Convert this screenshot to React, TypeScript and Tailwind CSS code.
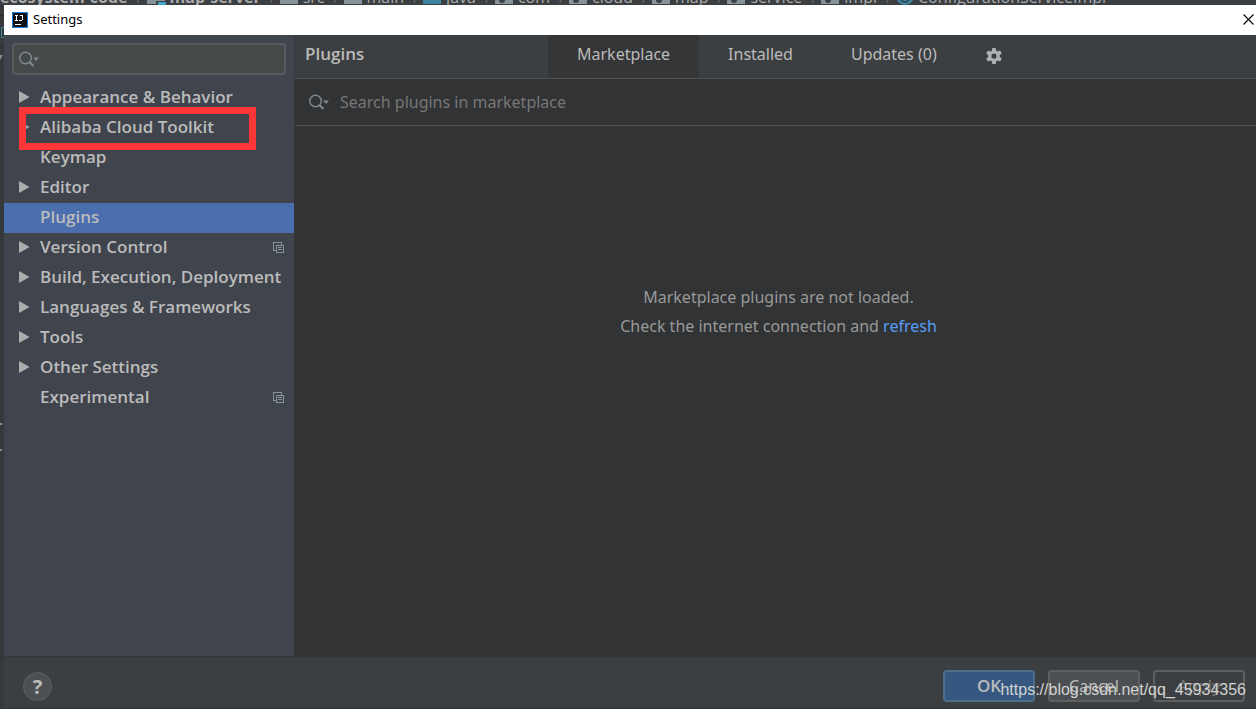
import type { ReactNode } from "react"
import clsx from "clsx"

type TreeItem = {
  label: string
  expandable?: boolean
  selected?: boolean
  projectLevel?: boolean
  highlighted?: boolean
}

const treeItems: TreeItem[] = [
  { label: "Appearance & Behavior", expandable: true },
  { label: "Alibaba Cloud Toolkit", expandable: true, highlighted: true },
  { label: "Keymap" },
  { label: "Editor", expandable: true },
  { label: "Plugins", selected: true },
  { label: "Version Control", expandable: true, projectLevel: true },
  { label: "Build, Execution, Deployment", expandable: true },
  { label: "Languages & Frameworks", expandable: true },
  { label: "Tools", expandable: true },
  { label: "Other Settings", expandable: true },
  { label: "Experimental", projectLevel: true },
]

const crumbs = ["src", "main", "java", "com", "cloud", "map", "service", "impl"]

const SearchIcon = () => (
  <svg width="22" height="18" viewBox="0 0 22 18" fill="none" className="shrink-0">
    <circle cx="7.5" cy="8" r="5.8" stroke="#7f8b91" strokeWidth="1.4" />
    <path d="M11.5 12l4 4" stroke="#7f8b91" strokeWidth="2" />
    <path d="M15 7.5h6l-3 3.5z" fill="#7f8b91" />
  </svg>
)

const ProjectIcon = () => (
  <svg width="11" height="11" viewBox="0 0 11 11" fill="none" shapeRendering="crispEdges">
    <path d="M2.5 8.5H.5V.5h8v2" stroke="#87939a" />
    <path d="M3.5 3.5h7v7h-7z" stroke="#87939a" />
    <path d="M5 5.5h4M5 7.5h4" stroke="#87939a" />
  </svg>
)

const GearIcon = () => (
  <svg width="16" height="16" viewBox="0 0 16 16">
    <g fill="#afb1b3">
      <path
        fillRule="evenodd"
        d="M8 2.2a5.8 5.8 0 100 11.6A5.8 5.8 0 008 2.2zm0 3.2a2.6 2.6 0 110 5.2 2.6 2.6 0 010-5.2z"
      />
      <path d="M6.3 0h3.4l.5 3.2H5.8zM6.3 16h3.4l.5-3.2H5.8z" />
      <path d="M6.3 0h3.4l.5 3.2H5.8zM6.3 16h3.4l.5-3.2H5.8z" transform="rotate(60 8 8)" />
      <path d="M6.3 0h3.4l.5 3.2H5.8zM6.3 16h3.4l.5-3.2H5.8z" transform="rotate(120 8 8)" />
    </g>
  </svg>
)

const IdeaLogo = () => (
  <svg width="16" height="16" viewBox="0 0 16 16" fill="none" shapeRendering="crispEdges">
    <path d="M0 0h16v16H0z" fill="#1a7df0" />
    <path d="M1 1h14v14H1z" fill="#101216" />
    <path d="M3 3h3v1H3zM4 4h1v4H4zM3 8h3v1H3zM8 3h3v1H8zM10 4h1v4h-1zM7 8h3v1H7zM3 12h6v1H3z" fill="#fff" />
  </svg>
)

const Folder = ({ color = "#87939a" }: { color?: string }) => (
  <svg width="18" height="5" viewBox="0 0 18 5" className="shrink-0">
    <path d="M0 0h18v4H0z" fill={color} />
  </svg>
)

const PackageFolder = () => (
  <svg width="18" height="5" viewBox="0 0 18 5" className="shrink-0">
    <path d="M0 0h18v4H0z" fill="#87939a" />
    <circle cx="7" cy="0" r="3" fill="#3c3f41" />
  </svg>
)

const ModuleFolder = () => (
  <svg width="20" height="5" viewBox="0 0 20 5" className="shrink-0">
    <path d="M0 0h18v1H9v3H0z" fill="#87939a" />
    <path d="M11 2h8v3h-8z" fill="#40a5c6" />
  </svg>
)

const ClassIcon = () => (
  <svg width="18" height="5" viewBox="0 0 18 5" fill="none" className="shrink-0">
    <circle cx="9" cy="-4" r="9" fill="#3e86a0" />
    <path d="M5 0q4 4 8 0" stroke="#2b3e47" strokeWidth="1.5" />
  </svg>
)

const crumbIcon = (crumb: string) => {
  if (crumb === "src" || crumb === "main") return <Folder />
  if (crumb === "java") return <Folder color="#3e86a0" />
  return <PackageFolder />
}

const Slash = () => <span className="ml-[9px] w-[10px] text-[#66696b]">/</span>

/* Lower edge of the editor's navigation bar, seen above the dialog */
const NavigationBar = () => (
  <div className="flex h-[5px] items-end overflow-hidden bg-[#3c3f41] font-['Open_Sans',sans-serif] leading-[15px] whitespace-nowrap text-[#a9abad]">
    <b>ecosystem-code</b>
    <Slash />
    <ModuleFolder />
    <b className="ml-[3px]">map-server</b>
    {crumbs.map((crumb) => (
      <span key={crumb} className="flex items-end">
        <Slash />
        {crumbIcon(crumb)}
        <span className="ml-[5px]">{crumb}</span>
      </span>
    ))}
    <Slash />
    <ClassIcon />
    <span className="ml-1">ConfigurationServiceImpl</span>
  </div>
)

/* Sliver of the editor's tool window, left of the dialog */
const EditorEdge = () => (
  <div className="w-1 shrink-0 bg-[#36393b]">
    <svg width="4" height="460" viewBox="0 0 4 460" fill="none">
      <path d="M0 10.500h4M0 41.500h4" stroke="#2b2b2b" />
      <path d="M4 22.500H1.500v10H4" stroke="#3e86a0" />
      <path d="M0 50h3l-3 5z" fill="#8a8c8e" />
      <path d="M0 418l3 1-3 1zM0 444l3 1-3 1z" fill="#adadad" />
    </svg>
  </div>
)

const TitleBar = () => (
  <header className="flex h-[30px] items-center justify-between bg-white pr-[2px] pb-px pl-2 text-black">
    <div className="flex items-center gap-[5px] text-[13px]">
      <IdeaLogo />
      <h1>Settings</h1>
    </div>
    <button type="button" aria-label="Close">
      <svg width="11" height="11" viewBox="0 0 11 11" stroke="#000" strokeWidth="1.1">
        <path d="M.5.5l10 10M10.500.5l-10 10" />
      </svg>
    </button>
  </header>
)

const TreeRow = ({ item }: { item: TreeItem }) => (
  <li className="relative">
    <button
      type="button"
      className={clsx(
        "flex h-[30px] w-full items-center pr-[10px] pb-[2px] pl-[15px] text-left",
        item.selected && "bg-[#4b6eaf]"
      )}
    >
      <span className="w-[21px] shrink-0">
        {item.expandable && (
          <svg width="11" height="12" viewBox="0 0 11 12">
            <path d="M0 0l10.500 6L0 12z" fill="#adadad" />
          </svg>
        )}
      </span>
      <span className="min-w-0 flex-1 whitespace-nowrap">{item.label}</span>
      {item.projectLevel && <ProjectIcon />}
    </button>
    {item.highlighted && (
      <span className="pointer-events-none absolute -top-[6px] left-[15px] h-[43px] w-[237px] border-[7px] border-[#fd3737]" />
    )}
  </li>
)

const Sidebar = () => (
  <aside className="w-[290px] shrink-0 bg-[#40444d] font-['Open_Sans',sans-serif] text-[17px] font-[650] text-[#bbbbbb]">
    <label className="mx-2 mt-2 flex h-8 items-center rounded-[4px] border-2 border-[#585b5d] bg-[#45494a] pl-1">
      <SearchIcon />
      <input type="text" aria-label="Search settings" className="min-w-0 flex-1 outline-none" />
    </label>
    <ul className="mt-2">
      {treeItems.map((item) => (
        <TreeRow key={item.label} item={item} />
      ))}
    </ul>
  </aside>
)

const Tab = ({ active, children }: { active?: boolean; children: ReactNode }) => (
  <button
    type="button"
    role="tab"
    aria-selected={!!active}
    className={clsx("h-full px-[29px] pb-[6px] whitespace-nowrap", active && "bg-[#343638]")}
  >
    {children}
  </button>
)

const PluginsPanel = () => (
  <main className="flex min-w-0 flex-1 flex-col border-l border-[#333537] bg-[#313335]">
    <div className="flex h-11 items-center border-b border-[#515151] bg-[#3c3f41] text-[#bbbbbb]">
      <h2 className="w-[253px] pb-[6px] pl-[10px] font-['Open_Sans',sans-serif] text-[17px] font-[650]">
        Plugins
      </h2>
      <div role="tablist" className="flex h-full">
        <Tab active>Marketplace</Tab>
        <Tab>Installed</Tab>
        <Tab>Updates (0)</Tab>
      </div>
      <button type="button" aria-label="Plugin options" className="ml-5 pb-[2px]">
        <GearIcon />
      </button>
    </div>
    <label className="flex h-[47px] items-center gap-[10px] border-b border-[#515151] pl-[13px]">
      <SearchIcon />
      <input
        type="text"
        aria-label="Search plugins"
        placeholder="Search plugins in marketplace"
        className="min-w-0 flex-1 outline-none placeholder:text-[#777777]"
      />
    </label>
    <div className="pt-[157px] pl-[6px] text-center leading-[29px] text-[#999999]">
      <p>Marketplace plugins are not loaded.</p>
      <p>
        Check the internet connection and{" "}
        <a href="#refresh" className="text-[#589df6]">
          refresh
        </a>
      </p>
    </div>
  </main>
)

const Footer = () => (
  <footer className="relative flex h-[53px] items-center justify-between border-y border-[#333537] bg-[#3c3f41] pt-[7px] pr-[11px] pl-[19px] text-[#bbbbbb]">
    <button
      type="button"
      aria-label="Help"
      className="size-[29px] rounded-full border border-[#5e6060] bg-[#4c5052] text-[20px] leading-[27px] font-bold"
    >
      ?
    </button>
    <div className="flex gap-[13px]">
      <button
        type="button"
        className="h-8 w-[92px] rounded-[4px] border-2 border-[#4c708c] bg-[#365880] font-['Open_Sans',sans-serif] text-[17px] font-[650]"
      >
        OK
      </button>
      <button type="button" className="h-8 w-[92px] rounded-[4px] border-2 border-[#5e6060] bg-[#4c5052]">
        Cancel
      </button>
      <button
        type="button"
        disabled
        className="h-8 w-[92px] rounded-[4px] border-2 border-[#5e6060] text-[#777777]"
      >
        Apply
      </button>
    </div>
    <span className="pointer-events-none absolute right-[10px] bottom-2 font-['Liberation_Sans',sans-serif] text-[16px] leading-5 text-[#d2d3d3]">
      https://blog.csdn.net/qq_45934356
    </span>
  </footer>
)

const App = () => {
  return (
    <div className="flex min-h-screen flex-col bg-[#323436] font-['Noto_Sans',sans-serif] text-[16px]">
      <NavigationBar />
      <div className="flex flex-1">
        <EditorEdge />
        <div className="flex min-w-0 flex-1 flex-col">
          <TitleBar />
          <div className="flex flex-1">
            <Sidebar />
            <PluginsPanel />
          </div>
          <Footer />
        </div>
      </div>
    </div>
  )
}

export default App
